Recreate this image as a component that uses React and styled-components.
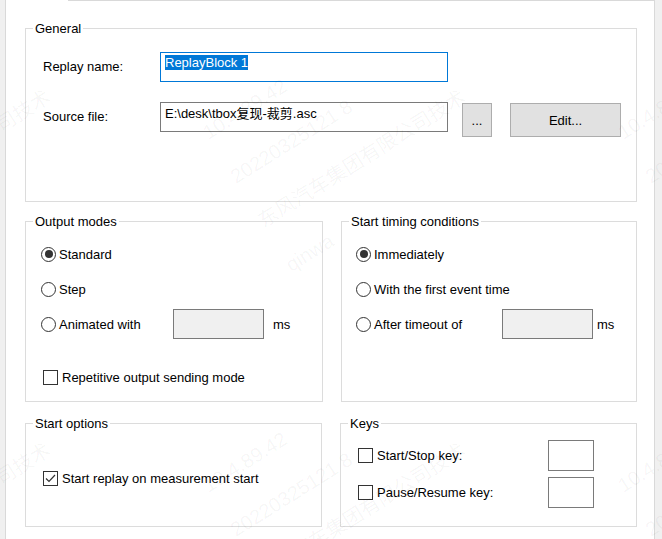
import React from 'react';
import styled, { createGlobalStyle } from 'styled-components';

const GlobalStyle = createGlobalStyle`
  html, body { margin: 0; padding: 0; }
  body {
    background: #f0f0f0;
    font-family: "Liberation Sans", Arial, "Noto Sans CJK SC", sans-serif;
    font-size: 13px;
    color: #000;
  }
`;

const Window = styled.div`
  position: relative;
  width: 662px;
  height: 539px;
  overflow: hidden;
  background: #f0f0f0;
  padding-left: 5px;
  box-sizing: border-box;
`;

const TabPage = styled.div`
  position: relative;
  width: 650px;
  min-height: 560px;
  box-sizing: border-box;
  background: #fff;
  border: 1px solid #d9d9d9;
  border-bottom: none;
  padding: 20px 17px 0 19px;

  /* opening under the selected tab */
  &::before {
    content: '';
    position: absolute;
    top: -1px;
    left: 0;
    width: 62px;
    height: 1px;
    background: #fff;
  }
`;

const Group = styled.fieldset`
  margin: 0;
  padding: 0;
  min-width: 0;
  border: 1px solid #dcdcdc;
`;

const Legend = styled.legend`
  margin-left: 7px;
  padding: 0 2px;
  line-height: 15px;
  font-size: 13px;
`;

const GroupBody = styled.div`
  display: flex;
  flex-direction: column;
  padding: ${p => p.$pad};
`;

const Columns = styled.div`
  display: grid;
  grid-template-columns: ${p => p.$cols};
  column-gap: 18px;
  margin-top: ${p => p.$top}px;
`;

/* General */
const FormRow = styled.div`
  display: flex;
  align-items: flex-start;
  margin-top: ${p => p.$top || 0}px;
`;

const FieldLabel = styled.div`
  width: 117px;
  line-height: 30px;
`;

const TextBox = styled.div`
  width: 288px;
  height: 30px;
  box-sizing: border-box;
  border: 1px solid ${p => (p.$focused ? '#0078d7' : '#7a7a7a')};
  padding: ${p => (p.$focused ? '2px 4px' : '3px 4px')};
  line-height: 16px;
  white-space: nowrap;
  overflow: hidden;
`;

const Selection = styled.span`
  background: #0078d7;
  color: #fff;
`;

const Button = styled.div`
  width: ${p => p.$w}px;
  height: 34px;
  margin: 1px 0 0 ${p => p.$gap}px;
  box-sizing: border-box;
  background: #e1e1e1;
  border: 1px solid #adadad;
  display: flex;
  align-items: center;
  justify-content: center;
  font-size: 13px;
`;

/* Options */
const OptionList = styled.div`
  display: flex;
  flex-direction: column;
  gap: 5px;
`;

const OptionRow = styled.div`
  display: flex;
  align-items: center;
  height: ${p => p.$h || 30}px;
  margin-top: ${p => p.$top || 0}px;
  margin-left: ${p => p.$indent || 0}px;
`;

const OptionLabel = styled.div`
  display: flex;
  align-items: center;
  width: ${p => (p.$w ? `${p.$w}px` : 'auto')};
  flex-shrink: 0;
`;

const RadioCircle = styled.span`
  width: 15px;
  height: 15px;
  box-sizing: border-box;
  border: 1px solid #333;
  border-radius: 50%;
  display: flex;
  align-items: center;
  justify-content: center;
  flex-shrink: 0;

  &::after {
    content: '';
    width: 8px;
    height: 8px;
    border-radius: 50%;
    background: ${p => (p.$checked ? '#333' : 'transparent')};
  }
`;

const CheckBox = styled.span`
  width: 15px;
  height: 15px;
  box-sizing: border-box;
  border: 1px solid #333;
  display: flex;
  align-items: center;
  justify-content: center;
  flex-shrink: 0;
  background: #fff;
`;

const Caption = styled.span`
  margin-left: ${p => p.$gap || 3}px;
  white-space: nowrap;
`;

const SmallBox = styled.div`
  width: ${p => p.$w}px;
  height: ${p => p.$h}px;
  box-sizing: border-box;
  border: 1px solid #7a7a7a;
  background: ${p => (p.$disabled ? '#f0f0f0' : '#fff')};
  flex-shrink: 0;
`;

const Unit = styled.span`
  margin-left: ${p => p.$gap}px;
`;

/* Watermark */
const WatermarkTile = styled.div`
  position: absolute;
  left: ${p => p.$x}px;
  top: ${p => p.$y}px;
  transform: rotate(-32deg);
  transform-origin: 0 0;
  pointer-events: none;
  color: rgba(0, 0, 0, 0.045);
  font-family: "Liberation Sans", "Noto Sans CJK SC", sans-serif;
  font-size: 20px;
  line-height: 52px;
  white-space: nowrap;
  z-index: 5;
`;

const Radio = ({ checked, label, width }) => (
  <OptionLabel $w={width}>
    <RadioCircle $checked={checked} />
    <Caption>{label}</Caption>
  </OptionLabel>
);

const Check = ({ checked, label, width }) => (
  <OptionLabel $w={width}>
    <CheckBox>
      {checked && (
        <svg width="11" height="11" viewBox="0 0 11 11">
          <polyline points="1,5.5 4,8.5 10,2" fill="none" stroke="#333" strokeWidth="1.2" />
        </svg>
      )}
    </CheckBox>
    <Caption $gap={4}>{label}</Caption>
  </OptionLabel>
);

const watermarkTiles = [
  [191, 112], [606, 112], [-224, 112],
  [191, 465], [606, 465], [-224, 465],
];

export default function App() {
  return (
    <>
      <GlobalStyle />
      <Window>
        <TabPage>
          <Group>
            <Legend>General</Legend>
            <GroupBody $pad="16px 0 64px 17px">
              <FormRow>
                <FieldLabel>Replay name:</FieldLabel>
                <TextBox $focused>
                  <Selection>ReplayBlock 1</Selection>
                </TextBox>
              </FormRow>
              <FormRow $top={20}>
                <FieldLabel>Source file:</FieldLabel>
                <TextBox>E:\desk\tbox复现-裁剪.asc</TextBox>
                <Button $w={30} $gap={14}>...</Button>
                <Button $w={111} $gap={18}>Edit...</Button>
              </FormRow>
            </GroupBody>
          </Group>

          <Columns $cols="298px 296px" $top={12}>
            <Group>
              <Legend>Output modes</Legend>
              <GroupBody $pad="10px 0 9px 15px">
                <OptionList>
                  <OptionRow><Radio checked label="Standard" /></OptionRow>
                  <OptionRow><Radio label="Step" /></OptionRow>
                  <OptionRow>
                    <Radio label="Animated with" width={132} />
                    <SmallBox $w={91} $h={30} $disabled />
                    <Unit $gap={9}>ms</Unit>
                  </OptionRow>
                </OptionList>
                <OptionRow $top={23} $indent={2}>
                  <Check label="Repetitive output sending mode" />
                </OptionRow>
              </GroupBody>
            </Group>

            <Group>
              <Legend>Start timing conditions</Legend>
              <GroupBody $pad="10px 0 9px 14px">
                <OptionList>
                  <OptionRow><Radio checked label="Immediately" /></OptionRow>
                  <OptionRow><Radio label="With the first event time" /></OptionRow>
                  <OptionRow>
                    <Radio label="After timeout of" width={146} />
                    <SmallBox $w={91} $h={30} $disabled />
                    <Unit $gap={4}>ms</Unit>
                  </OptionRow>
                </OptionList>
              </GroupBody>
            </Group>
          </Columns>

          <Columns $cols="297px 297px" $top={14}>
            <Group>
              <Legend>Start options</Legend>
              <GroupBody $pad="32px 0 0 17px">
                <OptionRow>
                  <Check checked label="Start replay on measurement start" />
                </OptionRow>
              </GroupBody>
            </Group>

            <Group>
              <Legend>Keys</Legend>
              <GroupBody $pad="9px 0 18px 17px">
                <OptionRow $h={31}>
                  <Check label="Start/Stop key:" width={190} />
                  <SmallBox $w={46} $h={31} />
                </OptionRow>
                <OptionRow $h={31} $top={6}>
                  <Check label="Pause/Resume key:" width={190} />
                  <SmallBox $w={46} $h={31} />
                </OptionRow>
              </GroupBody>
            </Group>
          </Columns>
        </TabPage>

        {watermarkTiles.map(([x, y], i) => (
          <WatermarkTile key={i} $x={x} $y={y}>
            <div>10.4.89.42</div>
            <div>20220325121 8</div>
            <div>东风汽车集团有限公司技术</div>
            <div>qinwa</div>
          </WatermarkTile>
        ))}
      </Window>
    </>
  );
}
